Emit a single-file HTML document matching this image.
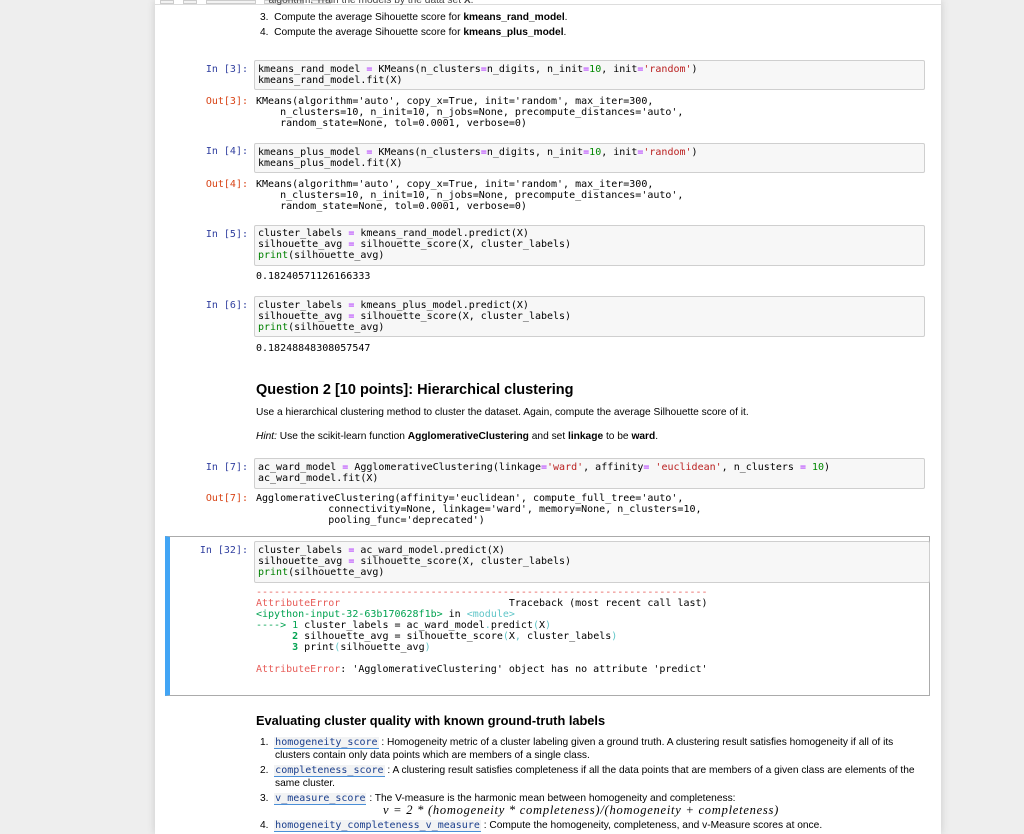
<!DOCTYPE html>
<html><head><meta charset="utf-8"><style>
*{margin:0;padding:0;box-sizing:border-box}
body{width:1024px;height:834px;background:#eeeeee;position:relative;overflow:hidden;font-family:"Liberation Sans",sans-serif;color:#000}
#nb{position:absolute;left:155px;top:0;width:786px;height:834px;background:#fff;box-shadow:0 0 8px rgba(0,0,0,.15)}
.a{position:absolute;white-space:pre}
.m{font-family:"DejaVu Sans Mono",monospace;font-size:10px;line-height:11px;color:#000}
.t{font-size:10.2px;line-height:12px}
.pi{color:#303F9F;font-family:"DejaVu Sans Mono",monospace;font-size:10px;line-height:11px;text-align:right;width:90px}
.po{color:#D84315;font-family:"DejaVu Sans Mono",monospace;font-size:10px;line-height:11px;text-align:right;width:90px}
.box{position:absolute;left:254px;width:671px;background:#f7f7f7;border:1px solid #cfcfcf;border-radius:2px}
.o{color:#AA22FF}.s{color:#BA2121}.n{color:#008800}.g{color:#008000}
.r{color:#e75c58}.gr{color:#00a250}.c{color:#60c6c8}.gb{color:#00a250;font-weight:bold}
code{font-family:"DejaVu Sans Mono",monospace;font-size:10px;background:#f2f3f4;color:#1a3e8c;border-bottom:1px solid #4a8fd8;padding:0 1px}
</style></head><body>
<div id="nb"></div>
<div style="position:absolute;left:155px;top:0;width:786px;height:5px;background:#fff;border-bottom:1px solid #ddd"></div>
<div class="a" style="left:160px;top:0;width:14px;height:4px;background:#f3f3f3;border:1px solid #ccc"></div>
<div class="a" style="left:183px;top:0;width:14px;height:4px;background:#f3f3f3;border:1px solid #ccc"></div>
<div class="a" style="left:206px;top:0;width:50px;height:4px;background:#f3f3f3;border:1px solid #ccc"></div>
<div class="a" style="left:264px;top:0;width:40px;height:4px;background:#f3f3f3;border:1px solid #ccc"></div>
<div class="a" style="left:311px;top:0;width:20px;height:4px;background:#f3f3f3;border:1px solid #ccc"></div>

<div class="a t" style="left:260px;top:-5px;color:#444">   algorithm. Train the models by the data set <b>X</b>.</div>
<div class="a t" style="left:260px;top:12px">3.  Compute the average Sihouette score for <b>kmeans_rand_model</b>.</div>
<div class="a t" style="left:260px;top:27px">4.  Compute the average Sihouette score for <b>kmeans_plus_model</b>.</div>

<div class="a pi" style="left:158px;top:64px">In [3]:</div>
<div class="box" style="top:60px;height:30px"></div>
<div class="a m" style="left:258px;top:64px">kmeans_rand_model <span class="o">=</span> KMeans(n_clusters<span class="o">=</span>n_digits, n_init<span class="o">=</span><span class="n">10</span>, init<span class="o">=</span><span class="s">'random'</span>)
kmeans_rand_model.fit(X)</div>
<div class="a po" style="left:158px;top:96px">Out[3]:</div>
<div class="a m" style="left:256px;top:96px">KMeans(algorithm='auto', copy_x=True, init='random', max_iter=300,
    n_clusters=10, n_init=10, n_jobs=None, precompute_distances='auto',
    random_state=None, tol=0.0001, verbose=0)</div>

<div class="a pi" style="left:158px;top:146px">In [4]:</div>
<div class="box" style="top:143px;height:30px"></div>
<div class="a m" style="left:258px;top:147px">kmeans_plus_model <span class="o">=</span> KMeans(n_clusters<span class="o">=</span>n_digits, n_init<span class="o">=</span><span class="n">10</span>, init<span class="o">=</span><span class="s">'random'</span>)
kmeans_plus_model.fit(X)</div>
<div class="a po" style="left:158px;top:179px">Out[4]:</div>
<div class="a m" style="left:256px;top:179px">KMeans(algorithm='auto', copy_x=True, init='random', max_iter=300,
    n_clusters=10, n_init=10, n_jobs=None, precompute_distances='auto',
    random_state=None, tol=0.0001, verbose=0)</div>

<div class="a pi" style="left:158px;top:229px">In [5]:</div>
<div class="box" style="top:225px;height:41px"></div>
<div class="a m" style="left:258px;top:228px">cluster_labels <span class="o">=</span> kmeans_rand_model.predict(X)
silhouette_avg <span class="o">=</span> silhouette_score(X, cluster_labels)
<span class="g">print</span>(silhouette_avg)</div>
<div class="a m" style="left:256px;top:271px">0.18240571126166333</div>

<div class="a pi" style="left:158px;top:300px">In [6]:</div>
<div class="box" style="top:296px;height:41px"></div>
<div class="a m" style="left:258px;top:300px">cluster_labels <span class="o">=</span> kmeans_plus_model.predict(X)
silhouette_avg <span class="o">=</span> silhouette_score(X, cluster_labels)
<span class="g">print</span>(silhouette_avg)</div>
<div class="a m" style="left:256px;top:343px">0.18248848308057547</div>

<div class="a" style="left:256px;top:381px;font-size:14.5px;font-weight:bold;line-height:19px">Question 2 [10 points]: Hierarchical clustering</div>
<div class="a t" style="left:256px;top:407px">Use a hierarchical clustering method to cluster the dataset. Again, compute the average Silhouette score of it.</div>
<div class="a t" style="left:256px;top:431px"><i>Hint:</i> Use the scikit-learn function <b>AgglomerativeClustering</b> and set <b>linkage</b> to be <b>ward</b>.</div>

<div class="a pi" style="left:158px;top:462px">In [7]:</div>
<div class="box" style="top:458px;height:31px"></div>
<div class="a m" style="left:258px;top:462px">ac_ward_model <span class="o">=</span> AgglomerativeClustering(linkage<span class="o">=</span><span class="s">'ward'</span>, affinity<span class="o">=</span> <span class="s">'euclidean'</span>, n_clusters <span class="o">=</span> <span class="n">10</span>)
ac_ward_model.fit(X)</div>
<div class="a po" style="left:158px;top:493px">Out[7]:</div>
<div class="a m" style="left:256px;top:493px">AgglomerativeClustering(affinity='euclidean', compute_full_tree='auto',
            connectivity=None, linkage='ward', memory=None, n_clusters=10,
            pooling_func='deprecated')</div>

<div class="a" style="left:165px;top:536px;width:765px;height:160px;border:1px solid #ababab;border-left:5px solid #42A5F5"></div>
<div class="a pi" style="left:158px;top:545px">In [32]:</div>
<div class="box" style="top:541px;height:42px;width:676px"></div>
<div class="a m" style="left:258px;top:545px">cluster_labels <span class="o">=</span> ac_ward_model.predict(X)
silhouette_avg <span class="o">=</span> silhouette_score(X, cluster_labels)
<span class="g">print</span>(silhouette_avg)</div>
<div class="a m" style="left:256px;top:587px"><span class="r">---------------------------------------------------------------------------</span>
<span class="r">AttributeError</span>                            Traceback (most recent call last)
<span class="gr">&lt;ipython-input-32-63b170628f1b&gt;</span> in <span class="c">&lt;module&gt;</span>
<span class="gr">----&gt; 1</span> cluster_labels = ac_ward_model<span class="c">.</span>predict<span class="c">(</span>X<span class="c">)</span>
<span class="gb">      2</span> silhouette_avg = silhouette_score<span class="c">(</span>X<span class="c">,</span> cluster_labels<span class="c">)</span>
<span class="gb">      3</span> print<span class="c">(</span>silhouette_avg<span class="c">)</span>

<span class="r">AttributeError</span>: 'AgglomerativeClustering' object has no attribute 'predict'</div>

<div class="a" style="left:256px;top:713px;font-size:12.8px;font-weight:bold;line-height:16px">Evaluating cluster quality with known ground-truth labels</div>
<div class="a t" style="left:260px;top:737px">1.  <code>homogeneity_score</code> : Homogeneity metric of a cluster labeling given a ground truth. A clustering result satisfies homogeneity if all of its</div>
<div class="a t" style="left:275px;top:750px">clusters contain only data points which are members of a single class.</div>
<div class="a t" style="left:260px;top:765px">2.  <code>completeness_score</code> : A clustering result satisfies completeness if all the data points that are members of a given class are elements of the</div>
<div class="a t" style="left:275px;top:778px">same cluster.</div>
<div class="a t" style="left:260px;top:793px">3.  <code>v_measure_score</code> : The V-measure is the harmonic mean between homogeneity and completeness:</div>
<div class="a" style="left:383px;top:803px;font-family:'Liberation Serif',serif;font-style:italic;font-size:12.5px;letter-spacing:0.75px;line-height:14px">v = 2 * (homogeneity * completeness)/(homogeneity + completeness)</div>
<div class="a t" style="left:260px;top:820px">4.  <code>homogeneity_completeness_v_measure</code> : Compute the homogeneity, completeness, and v-Measure scores at once.</div>
</body></html>
